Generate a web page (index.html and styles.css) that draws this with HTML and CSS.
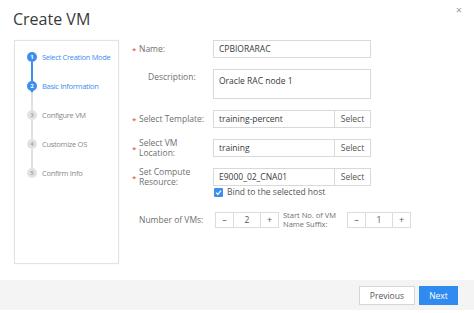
FILE: index.html
```html
<!DOCTYPE html>
<html lang="en">
<head>
    <meta charset="UTF-8">
    <title>Create VM</title>
    <link rel="stylesheet" href="styles.css">
</head>
<body>
    <div class="dialog">
        <div class="dialog-header">
            <h1>Create VM</h1>
            <span class="close">&#215;</span>
        </div>
        <div class="dialog-body">
            <div class="steps">
                <div class="step done">
                    <div class="step-marker"><span class="step-num">1</span><span class="step-line"></span></div>
                    <span class="step-label">Select Creation Mode</span>
                </div>
                <div class="step current">
                    <div class="step-marker"><span class="step-num">2</span><span class="step-line"></span></div>
                    <span class="step-label">Basic Information</span>
                </div>
                <div class="step">
                    <div class="step-marker"><span class="step-num">3</span><span class="step-line"></span></div>
                    <span class="step-label">Configure VM</span>
                </div>
                <div class="step">
                    <div class="step-marker"><span class="step-num">4</span><span class="step-line"></span></div>
                    <span class="step-label">Customize OS</span>
                </div>
                <div class="step last">
                    <div class="step-marker"><span class="step-num">5</span></div>
                    <span class="step-label">Confirm Info</span>
                </div>
            </div>

            <div class="form">
                <div class="form-row">
                    <label class="form-label required">Name:</label>
                    <div class="input">CPBIORARAC</div>
                </div>
                <div class="form-row top">
                    <label class="form-label indent">Description:</label>
                    <div class="input textarea">Oracle RAC node 1</div>
                </div>
                <div class="form-row">
                    <label class="form-label required">Select Template:</label>
                    <div class="input group"><span class="value">training-percent</span><span class="select-btn">Select</span></div>
                </div>
                <div class="form-row">
                    <label class="form-label required two-line">Select VM<br>Location:</label>
                    <div class="input group"><span class="value">training</span><span class="select-btn">Select</span></div>
                </div>
                <div class="form-row">
                    <label class="form-label required two-line">Set Compute<br>Resource:</label>
                    <div class="input group"><span class="value">E9000_02_CNA01</span><span class="select-btn">Select</span></div>
                </div>
                <div class="form-row check-row">
                    <span class="form-label"></span>
                    <span class="checkbox">
                        <svg width="7" height="7" viewBox="0 0 10 10"><path d="M1.5 5.2 L4 7.6 L8.6 2.4" fill="none" stroke="#fff" stroke-width="1.8"/></svg>
                    </span>
                    <span class="check-text">Bind to the selected host</span>
                </div>
                <div class="form-row count-row">
                    <label class="form-label">Number of VMs:</label>
                    <div class="spinner">
                        <span class="spin-btn">&#8211;</span><span class="spin-value">2</span><span class="spin-btn">+</span>
                    </div>
                    <span class="suffix-label">Start No. of VM<br>Name Suffix:</span>
                    <div class="spinner">
                        <span class="spin-btn">&#8211;</span><span class="spin-value">1</span><span class="spin-btn">+</span>
                    </div>
                </div>
            </div>
        </div>
        <div class="dialog-footer">
            <button class="btn">Previous</button>
            <button class="btn primary">Next</button>
        </div>
    </div>
</body>
</html>
```

FILE: styles.css
```css
* {
    margin: 0;
    padding: 0;
    box-sizing: border-box;
}

body {
    font-family: 'Open Sans', 'Noto Sans', sans-serif;
    background: #ffffff;
    color: #333;
    width: 474px;
    height: 313px;
    overflow: hidden;
}

.dialog-header {
    height: 40px;
    display: flex;
    justify-content: space-between;
    padding: 0 12px 0 13px;
}

.dialog-header h1 {
    font-size: 16px;
    font-weight: normal;
    line-height: 20px;
    padding-top: 9px;
    color: #3a3a3a;
}

.close {
    font-size: 11px;
    line-height: 11px;
    color: #999;
    margin-top: 4px;
}

.dialog-body {
    display: flex;
    gap: 12px;
    padding: 0 14px;
    height: 224px;
}

/* step list */
.steps {
    width: 105px;
    border: 1px solid #e3e3e3;
    padding: 11px 0 0 12px;
    box-shadow: 0 0 2px rgba(0, 0, 0, 0.05);
}

.step {
    display: flex;
    height: 29px;
    gap: 5px;
}

.step-marker {
    display: flex;
    flex-direction: column;
    align-items: center;
    width: 10px;
}

.step-num {
    width: 10px;
    height: 10px;
    border-radius: 50%;
    background: #e2e2e2;
    color: #a8a8a8;
    font-size: 6px;
    line-height: 10px;
    text-align: center;
    font-weight: bold;
    position: relative;
}

.step-line {
    flex: 1;
    width: 2px;
    background: #e0e0e0;
}

.step.done .step-num,
.step.current .step-num {
    background: #3d8eef;
    color: #fff;
}

.step.done .step-line {
    background: #3d8eef;
}

.step.current .step-num::after {
    content: '';
    position: absolute;
    left: 3px;
    bottom: -2px;
    border-left: 2px solid transparent;
    border-right: 2px solid transparent;
    border-top: 3px solid #3d8eef;
}

.step-label {
    font-size: 7.5px;
    line-height: 10px;
    color: #8a8a8a;
    letter-spacing: -0.3px;
    white-space: nowrap;
}

.step.done .step-label,
.step.current .step-label {
    color: #3d8eef;
}

/* form */
.form {
    display: flex;
    flex-direction: column;
    gap: 11px;
    font-size: 8.5px;
}

.form-row {
    display: flex;
    align-items: center;
}

.form-row.top {
    align-items: flex-start;
}

.form-label {
    width: 82px;
    flex-shrink: 0;
    color: #707070;
    padding-left: 8px;
    position: relative;
    line-height: 10px;
}

.form-label.indent {
    padding-left: 17px;
    padding-top: 3px;
}

.form-label.two-line {
    line-height: 9.5px;
    margin: -2px 0 -1px;
}

.form-label.required::before {
    content: '*';
    position: absolute;
    left: 1px;
    top: 50%;
    margin-top: -3px;
    color: #e0403a;
    font-size: 8px;
    line-height: 8px;
}

.input {
    width: 158px;
    height: 18px;
    border: 1px solid #d9d9d9;
    padding-left: 5px;
    line-height: 16px;
    color: #3a3a3a;
    display: flex;
}

.input.textarea {
    height: 30px;
    padding-top: 3px;
}

.input.group {
    padding-left: 0;
}

.input.group .value {
    flex: 1;
    padding-left: 5px;
}

.select-btn {
    width: 36px;
    border-left: 1px solid #d9d9d9;
    text-align: center;
    color: #555;
}

.check-row {
    margin-top: -10px;
}

.checkbox {
    width: 9px;
    height: 9px;
    border-radius: 1px;
    background: #3d8eef;
    display: flex;
    align-items: center;
    justify-content: center;
    margin-left: 1px;
}

.check-text {
    margin-left: 4px;
    color: #555;
    line-height: 10px;
}

.count-row {
    margin-top: 4px;
}

.spinner {
    display: flex;
    height: 16px;
    border: 1px solid #dcdcdc;
    color: #555;
    line-height: 14px;
}

.count-row .form-label + .spinner {
    margin-left: 2px;
}

.spin-btn {
    width: 17px;
    text-align: center;
    font-size: 9px;
}

.spin-value {
    width: 28px;
    text-align: center;
    border-left: 1px solid #dcdcdc;
    border-right: 1px solid #dcdcdc;
}

.suffix-label {
    width: 68px;
    padding-left: 4px;
    color: #707070;
    line-height: 9.5px;
    font-size: 7.5px;
    margin: -2px 0;
}

/* footer */
.dialog-footer {
    margin-top: 16px;
    height: 30px;
    background: #f4f4f4;
    display: flex;
    justify-content: flex-end;
    align-items: center;
    gap: 4px;
    padding-right: 16px;
}

.btn {
    font-family: inherit;
    font-size: 8.5px;
    height: 19px;
    padding: 0 10px;
    border: 1px solid #d6d6d6;
    background: #fff;
    color: #555;
}

.btn.primary {
    width: 39px;
    padding: 0;
    border-color: #2f8bf0;
    background: #2f8bf0;
    color: #fff;
}
```
